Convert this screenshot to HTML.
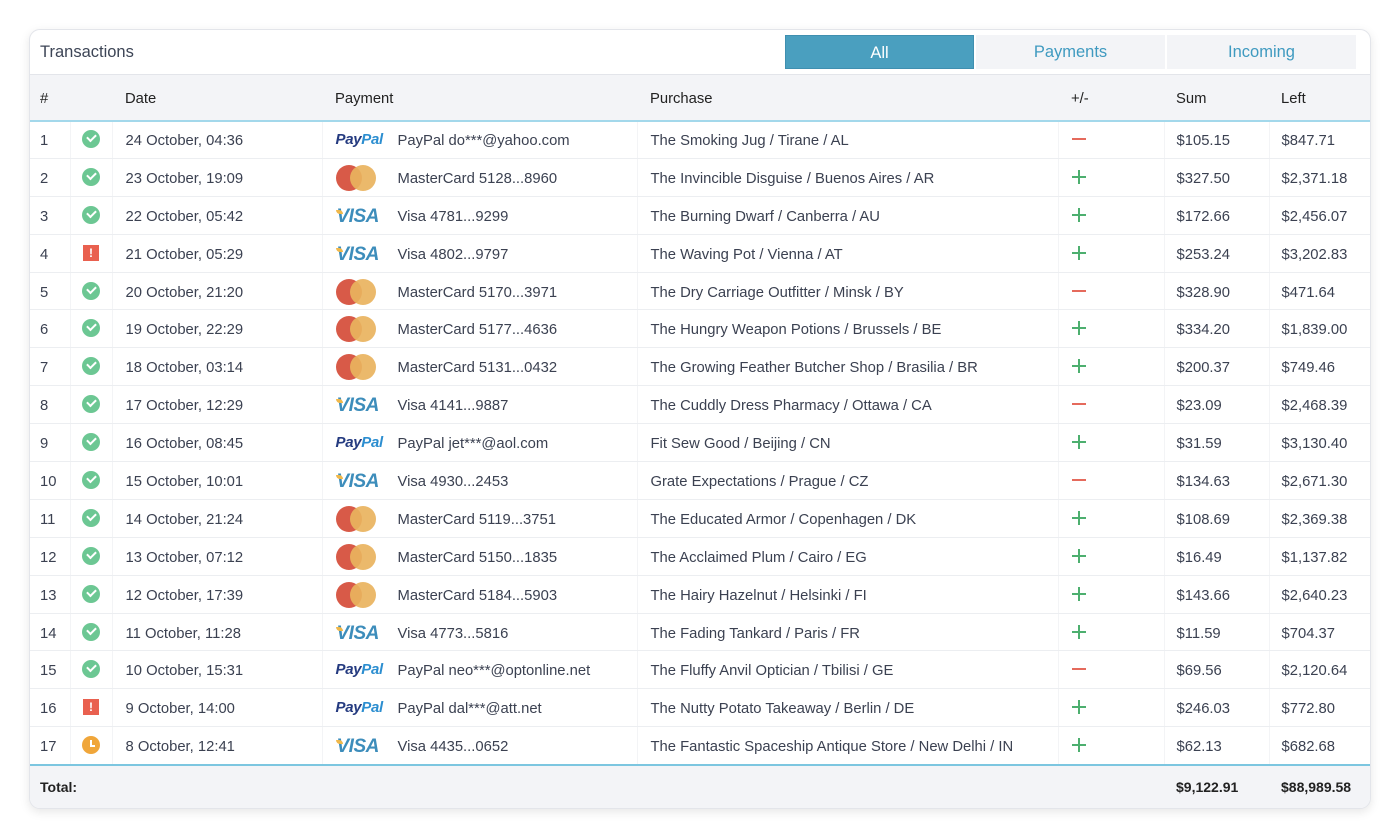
<!DOCTYPE html>
<html><head><meta charset="utf-8"><style>
*{box-sizing:border-box;margin:0;padding:0}
body{width:1400px;height:838px;background:#fff;font-family:"Liberation Sans",sans-serif;font-size:14.8px;color:#3b4151;position:relative;overflow:hidden}
.card{position:absolute;left:29px;top:29px;width:1342px;height:780px;border:1px solid #e3e5ea;border-radius:11px;box-shadow:0 3px 10px rgba(0,0,0,.1);overflow:hidden;background:#fff}
.title{position:absolute;left:10px;top:13px;font-size:16.5px;color:#3d4556}
.tab{position:absolute;top:5px;height:34px;width:189px;text-align:center;line-height:34px;font-size:16.5px;color:#3f9ac0;background:#f3f4f7}
.tab.on{background:#4a9fbf;color:#fff;border:1px solid #3f8fb0}
table{position:absolute;left:0;top:44px;border-collapse:collapse;table-layout:fixed;width:1342px}
th{height:46px;background:#f3f4f7;font-weight:normal;color:#222;text-align:left;border-top:1px solid #e3e5ea;border-bottom:2px solid #a3d8eb;vertical-align:middle;line-height:20px;padding-top:3px}
td{height:37.9px;border-bottom:1px solid #eceef1;border-left:1px solid #f3f4f6;white-space:nowrap;vertical-align:middle;line-height:20px;padding-top:3px}
td:first-child{border-left:none}
tbody tr:last-child td{border-bottom:2px solid #7cc6e0}
th,td{padding-left:10px}
.c2{padding-left:0;text-align:center}
.c3,.c4{padding-left:13px}
.c5{padding-left:13px}
.c6{padding-left:13px}
.c7,.c8{padding-left:12px}
tfoot td{height:43px;background:#f3f4f7;border:none;color:#222;font-weight:bold;font-size:14px;padding-top:1px}
.ic,.m,.p{position:relative;top:-2px}
.pay{position:relative;top:-1px}
.pay .txt{position:relative;top:1px}
.ic{display:flex;justify-content:center;align-items:center;height:20px}
.ok{display:block;width:18px;height:18px;border-radius:50%;background:#6cc793;position:relative}
.ok:after{content:"";position:absolute;left:5px;top:4px;width:7px;height:4px;border-left:2px solid #fff;border-bottom:2px solid #fff;transform:rotate(-45deg)}
.er{display:block;width:16px;height:16px;background:#e9604f;color:#fff;font-size:12px;font-weight:bold;line-height:16px;text-align:center}
.cl{display:block;width:18px;height:18px;border-radius:50%;background:#f0a63a;position:relative}
.cl:after{content:"";position:absolute;left:8px;top:4px;width:3px;height:5px;border-left:2px solid #fff;border-bottom:2px solid #fff}
.pay{display:flex;align-items:center;height:26px}
.lg{display:block;width:62px;flex:none}
.pp{font-weight:bold;font-style:italic;font-size:15px;color:#253b80;letter-spacing:-.3px;line-height:18px}
.pp b{color:#2c8ed0}
.vi{font-weight:bold;font-style:italic;font-size:19px;color:#3d8dbb;letter-spacing:-.5px;position:relative;padding-left:1px;line-height:20px;top:1px}
.vi:before{content:"";position:absolute;left:0;top:3px;width:7px;height:4px;background:#f0b84a;border-radius:0 6px 0 6px}
.mc{position:relative;height:26px}
.mc i{position:absolute;top:0;width:26px;height:26px;border-radius:50%}
.mc i:first-child{left:0;background:#d85a48}
.mc i:last-child{left:14px;background:#e9b35e;opacity:.92}
.m,.p{display:block;width:14px;height:14px}
.m:before,.p:before{content:"";position:absolute;left:0;top:6px;width:14px;height:2px}
.p:after{content:"";position:absolute;left:6px;top:0;width:2px;height:14px;background:#4daf6f}
.m:before{background:#e56a5c}.p:before{background:#4daf6f}
</style></head><body>
<div class="card">
<div class="title">Transactions</div>
<div class="tab on" style="left:755px">All</div>
<div class="tab" style="left:946px">Payments</div>
<div class="tab" style="left:1137px">Incoming</div>
<table>
<colgroup><col style="width:40px"><col style="width:42px"><col style="width:210px"><col style="width:315px"><col style="width:421px"><col style="width:106px"><col style="width:105px"><col style="width:103px"></colgroup>
<thead><tr><th>#</th><th class="c2"></th><th class="c3">Date</th><th class="c4">Payment</th><th class="c5">Purchase</th><th class="c6">+/-</th><th class="c7">Sum</th><th class="c8">Left</th></tr></thead>
<tbody>
<tr><td>1</td><td class="c2"><div class="ic"><span class="ok"></span></div></td><td class="c3">24 October, 04:36</td><td class="c4"><div class="pay"><span class="lg pp">Pay<b>Pal</b></span><span class="txt">PayPal do***@yahoo.com</span></div></td><td class="c5">The Smoking Jug / Tirane / AL</td><td class="c6"><span class="m"></span></td><td class="c7">$105.15</td><td class="c8">$847.71</td></tr>
<tr><td>2</td><td class="c2"><div class="ic"><span class="ok"></span></div></td><td class="c3">23 October, 19:09</td><td class="c4"><div class="pay"><span class="lg mc"><i></i><i></i></span><span class="txt">MasterCard 5128...8960</span></div></td><td class="c5">The Invincible Disguise / Buenos Aires / AR</td><td class="c6"><span class="p"></span></td><td class="c7">$327.50</td><td class="c8">$2,371.18</td></tr>
<tr><td>3</td><td class="c2"><div class="ic"><span class="ok"></span></div></td><td class="c3">22 October, 05:42</td><td class="c4"><div class="pay"><span class="lg vi">VISA</span><span class="txt">Visa 4781...9299</span></div></td><td class="c5">The Burning Dwarf / Canberra / AU</td><td class="c6"><span class="p"></span></td><td class="c7">$172.66</td><td class="c8">$2,456.07</td></tr>
<tr><td>4</td><td class="c2"><div class="ic"><span class="er">!</span></div></td><td class="c3">21 October, 05:29</td><td class="c4"><div class="pay"><span class="lg vi">VISA</span><span class="txt">Visa 4802...9797</span></div></td><td class="c5">The Waving Pot / Vienna / AT</td><td class="c6"><span class="p"></span></td><td class="c7">$253.24</td><td class="c8">$3,202.83</td></tr>
<tr><td>5</td><td class="c2"><div class="ic"><span class="ok"></span></div></td><td class="c3">20 October, 21:20</td><td class="c4"><div class="pay"><span class="lg mc"><i></i><i></i></span><span class="txt">MasterCard 5170...3971</span></div></td><td class="c5">The Dry Carriage Outfitter / Minsk / BY</td><td class="c6"><span class="m"></span></td><td class="c7">$328.90</td><td class="c8">$471.64</td></tr>
<tr><td>6</td><td class="c2"><div class="ic"><span class="ok"></span></div></td><td class="c3">19 October, 22:29</td><td class="c4"><div class="pay"><span class="lg mc"><i></i><i></i></span><span class="txt">MasterCard 5177...4636</span></div></td><td class="c5">The Hungry Weapon Potions / Brussels / BE</td><td class="c6"><span class="p"></span></td><td class="c7">$334.20</td><td class="c8">$1,839.00</td></tr>
<tr><td>7</td><td class="c2"><div class="ic"><span class="ok"></span></div></td><td class="c3">18 October, 03:14</td><td class="c4"><div class="pay"><span class="lg mc"><i></i><i></i></span><span class="txt">MasterCard 5131...0432</span></div></td><td class="c5">The Growing Feather Butcher Shop / Brasilia / BR</td><td class="c6"><span class="p"></span></td><td class="c7">$200.37</td><td class="c8">$749.46</td></tr>
<tr><td>8</td><td class="c2"><div class="ic"><span class="ok"></span></div></td><td class="c3">17 October, 12:29</td><td class="c4"><div class="pay"><span class="lg vi">VISA</span><span class="txt">Visa 4141...9887</span></div></td><td class="c5">The Cuddly Dress Pharmacy / Ottawa / CA</td><td class="c6"><span class="m"></span></td><td class="c7">$23.09</td><td class="c8">$2,468.39</td></tr>
<tr><td>9</td><td class="c2"><div class="ic"><span class="ok"></span></div></td><td class="c3">16 October, 08:45</td><td class="c4"><div class="pay"><span class="lg pp">Pay<b>Pal</b></span><span class="txt">PayPal jet***@aol.com</span></div></td><td class="c5">Fit Sew Good / Beijing / CN</td><td class="c6"><span class="p"></span></td><td class="c7">$31.59</td><td class="c8">$3,130.40</td></tr>
<tr><td>10</td><td class="c2"><div class="ic"><span class="ok"></span></div></td><td class="c3">15 October, 10:01</td><td class="c4"><div class="pay"><span class="lg vi">VISA</span><span class="txt">Visa 4930...2453</span></div></td><td class="c5">Grate Expectations / Prague / CZ</td><td class="c6"><span class="m"></span></td><td class="c7">$134.63</td><td class="c8">$2,671.30</td></tr>
<tr><td>11</td><td class="c2"><div class="ic"><span class="ok"></span></div></td><td class="c3">14 October, 21:24</td><td class="c4"><div class="pay"><span class="lg mc"><i></i><i></i></span><span class="txt">MasterCard 5119...3751</span></div></td><td class="c5">The Educated Armor / Copenhagen / DK</td><td class="c6"><span class="p"></span></td><td class="c7">$108.69</td><td class="c8">$2,369.38</td></tr>
<tr><td>12</td><td class="c2"><div class="ic"><span class="ok"></span></div></td><td class="c3">13 October, 07:12</td><td class="c4"><div class="pay"><span class="lg mc"><i></i><i></i></span><span class="txt">MasterCard 5150...1835</span></div></td><td class="c5">The Acclaimed Plum / Cairo / EG</td><td class="c6"><span class="p"></span></td><td class="c7">$16.49</td><td class="c8">$1,137.82</td></tr>
<tr><td>13</td><td class="c2"><div class="ic"><span class="ok"></span></div></td><td class="c3">12 October, 17:39</td><td class="c4"><div class="pay"><span class="lg mc"><i></i><i></i></span><span class="txt">MasterCard 5184...5903</span></div></td><td class="c5">The Hairy Hazelnut / Helsinki / FI</td><td class="c6"><span class="p"></span></td><td class="c7">$143.66</td><td class="c8">$2,640.23</td></tr>
<tr><td>14</td><td class="c2"><div class="ic"><span class="ok"></span></div></td><td class="c3">11 October, 11:28</td><td class="c4"><div class="pay"><span class="lg vi">VISA</span><span class="txt">Visa 4773...5816</span></div></td><td class="c5">The Fading Tankard / Paris / FR</td><td class="c6"><span class="p"></span></td><td class="c7">$11.59</td><td class="c8">$704.37</td></tr>
<tr><td>15</td><td class="c2"><div class="ic"><span class="ok"></span></div></td><td class="c3">10 October, 15:31</td><td class="c4"><div class="pay"><span class="lg pp">Pay<b>Pal</b></span><span class="txt">PayPal neo***@optonline.net</span></div></td><td class="c5">The Fluffy Anvil Optician / Tbilisi / GE</td><td class="c6"><span class="m"></span></td><td class="c7">$69.56</td><td class="c8">$2,120.64</td></tr>
<tr><td>16</td><td class="c2"><div class="ic"><span class="er">!</span></div></td><td class="c3">9 October, 14:00</td><td class="c4"><div class="pay"><span class="lg pp">Pay<b>Pal</b></span><span class="txt">PayPal dal***@att.net</span></div></td><td class="c5">The Nutty Potato Takeaway / Berlin / DE</td><td class="c6"><span class="p"></span></td><td class="c7">$246.03</td><td class="c8">$772.80</td></tr>
<tr><td>17</td><td class="c2"><div class="ic"><span class="cl"></span></div></td><td class="c3">8 October, 12:41</td><td class="c4"><div class="pay"><span class="lg vi">VISA</span><span class="txt">Visa 4435...0652</span></div></td><td class="c5">The Fantastic Spaceship Antique Store / New Delhi / IN</td><td class="c6"><span class="p"></span></td><td class="c7">$62.13</td><td class="c8">$682.68</td></tr>
</tbody>
<tfoot><tr><td colspan="6">Total:</td><td class="c7">$9,122.91</td><td class="c8">$88,989.58</td></tr></tfoot>
</table>
</div>
</body></html>
